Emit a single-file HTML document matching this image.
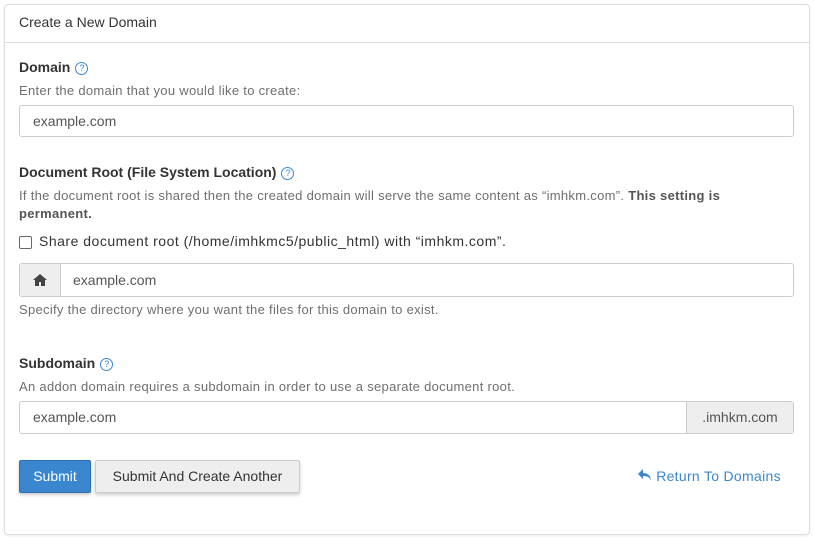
<!DOCTYPE html>
<html><head><style>
body{margin:0;width:814px;height:539px;background:#fff;font-family:"Liberation Sans",sans-serif;color:#333;position:relative;overflow:hidden}
.panel{position:absolute;left:4px;top:4px;width:804px;height:529px;border:1px solid #ddd;border-radius:4px;box-shadow:0 1px 2px rgba(0,0,0,.08)}
.hdr{position:absolute;left:0;top:0;width:804px;height:37px;border-bottom:1px solid #ddd}
.a{position:absolute;white-space:nowrap}
.lbl{font-weight:bold;font-size:14px;color:#333}
.help{font-size:13px;color:#6f6f6f;letter-spacing:0.3px}
.q{display:inline-block;width:11px;height:11px;border:1.2px solid #3a87d0;border-radius:50%;color:#3a87d0;font-size:9px;line-height:11px;text-align:center;font-weight:normal;vertical-align:1px;margin-left:5px}
.inp{position:absolute;border:1px solid #ccc;border-radius:3px;height:31px;box-sizing:border-box;font-size:14px;color:#555;line-height:29px}
.btn{position:absolute;height:33px;box-sizing:border-box;font-size:14px;line-height:31px;text-align:center;border-radius:2px}
</style></head><body>
<div class="panel"><div class="hdr"></div></div>
<div class="a" style="left:19px;top:14px;font-size:14px;color:#333">Create a New Domain</div>
<div class="a lbl" style="left:19px;top:59px">Domain<span class="q">?</span></div>
<div class="a help" style="left:19px;top:83px">Enter the domain that you would like to create:</div>
<div class="inp" style="left:19px;top:105px;width:775px;height:32px;padding-left:13px;line-height:30px">example.com</div>
<div class="a lbl" style="left:19px;top:164px">Document Root (File System Location)<span class="q">?</span></div>
<div class="a help" style="left:19px;top:188px">If the document root is shared then the created domain will serve the same content as “imhkm.com”. <b style="color:#555">This setting is</b></div>
<div class="a help" style="left:19px;top:206px"><b style="color:#555">permanent.</b></div>
<div class="a" style="left:19px;top:236px;width:11px;height:11px;border:1px solid #666;border-radius:2px"></div>
<div class="a" style="left:39px;top:233px;font-size:14px;color:#333;letter-spacing:0.5px">Share document root (/home/imhkmc5/public_html) with “imhkm.com”.</div>
<div class="inp" style="left:19px;top:263px;width:775px;height:34px;line-height:32px">
<div style="position:absolute;left:0;top:0;width:40px;height:32px;background:#eee;border-right:1px solid #ccc;border-radius:3px 0 0 3px">
<svg width="14" height="12" viewBox="0 0 14 12" style="position:absolute;left:13px;top:10px"><path d="M7 0L0 6h2v6h4V8h2v4h4V6h2z" fill="#444"/></svg></div>
<span style="position:absolute;left:53px">example.com</span></div>
<div class="a help" style="left:19px;top:302px">Specify the directory where you want the files for this domain to exist.</div>
<div class="a lbl" style="left:19px;top:355px">Subdomain<span class="q">?</span></div>
<div class="a help" style="left:19px;top:379px">An addon domain requires a subdomain in order to use a separate document root.</div>
<div class="inp" style="left:19px;top:401px;width:775px;height:33px;line-height:31px">
<span style="position:absolute;left:13px">example.com</span>
<div style="position:absolute;right:0;top:0;width:106px;height:31px;background:#eee;border-left:1px solid #ccc;text-align:center">.imhkm.com</div></div>
<div class="btn" style="left:19px;top:460px;width:72px;background:#3a87d0;color:#fff;border:1px solid #2d6fad;box-shadow:0 2px 3px rgba(0,0,0,.2)">Submit</div>
<div class="btn" style="left:95px;top:460px;width:205px;background:#eee;color:#333;border:1px solid #ccc;box-shadow:0 2px 3px rgba(0,0,0,.2)">Submit And Create Another</div>
<div class="a" style="left:638px;top:468px;font-size:14px;color:#3a87d0;letter-spacing:0.3px"><svg width="14" height="13" viewBox="0 0 14 13" style="vertical-align:-1px"><path d="M5 0L0 5l5 5V7c4 0 7 1 8 5 0-5-3-8-8-8z" fill="#3a87d0"/></svg> Return To Domains</div>
</body></html>
